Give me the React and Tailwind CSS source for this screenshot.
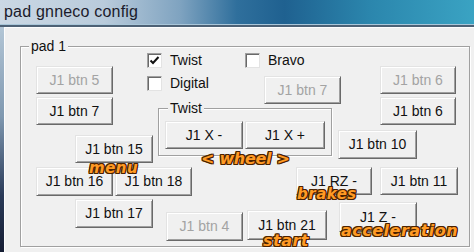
import React from 'react';

const font = { fontFamily: '"Liberation Sans", Arial, sans-serif' };

function Btn({ w = 'w-[77px]', h = 'h-[28px]', disabled, className = '', children }) {
  return (
    <div
      className={`${w} ${h} shrink-0 flex items-center justify-center bg-[#f0f0f0] border border-t-[#e3e3e3] border-l-[#e3e3e3] border-b-[#696969] border-r-[#696969] shadow-[inset_1px_1px_0_#ffffff,inset_-1px_-1px_0_#a0a0a0] text-[14px] ${disabled ? 'text-[#a3a3a3]' : 'text-[#111]'} ${className}`}
    >
      {children}
    </div>
  );
}

function Check({ checked, label }) {
  return (
    <div className="flex items-center gap-[8px] h-[15px] text-[14px] text-[#111]">
      <div className="w-[15px] h-[15px] bg-white border border-t-[#a0a0a0] border-l-[#a0a0a0] border-b-[#e3e3e3] border-r-[#e3e3e3] shadow-[inset_1px_1px_0_#696969] flex items-center justify-center">
        {checked && (
          <svg width="11" height="11" viewBox="0 0 11 11">
            <path d="M1.5 5.5 L4 8 L9.5 2" fill="none" stroke="#111" strokeWidth="2" />
          </svg>
        )}
      </div>
      <span>{label}</span>
    </div>
  );
}

// orange hand-written notes pasted over the dialog
function Note({ className, children }) {
  return (
    <div
      className={`absolute italic font-bold text-[#ff9a24] whitespace-nowrap leading-none ${className}`}
      style={{
        fontFamily: '"DejaVu Sans", sans-serif',
        textShadow:
          '1px 0 0 #4a2200, -1px 0 0 #4a2200, 0 1px 0 #4a2200, 0 -1px 0 #4a2200, 1px 1px 0 #4a2200, -1px -1px 0 #4a2200, 1px -1px 0 #4a2200, -1px 1px 0 #4a2200',
      }}
    >
      {children}
    </div>
  );
}

export default function App() {
  return (
    <div className="w-[474px] h-[252px] flex flex-col overflow-hidden bg-[#f0f0f0]" style={font}>
      {/* title bar */}
      <div className="h-[24px] flex items-center pl-[4px] bg-[linear-gradient(90deg,#cbd8e4_0%,#b9cbdb_22%,#7fa3c0_38%,#2f6f9c_50%,#1f6190_60%,#2b86ad_78%,#3aa3c3_100%)]">
        <span className="text-[16px] text-[#1b1b2b] tracking-[0.2px]">pad gnneco config</span>
      </div>
      <div className="h-px bg-[#a9c6d9]" />
      <div className="h-[2px] bg-[#4d6175]" />

      <div className="flex flex-1">
        <div className="w-[4px] bg-[linear-gradient(180deg,#b3c6d6_0%,#7f98b0_40%,#2a3a58_75%,#151d33_100%)]" />
        <div className="flex-1 border-t border-l border-[#fdfdfd] bg-[#f0f0f0] pl-[15px] pt-[18px]">
          {/* group box pad 1 */}
          <div className="relative w-[450px] h-[201px] border border-[#a0a0a0] shadow-[1px_1px_0_#ffffff,inset_1px_1px_0_#ffffff] pl-[15px] pt-[6px]">
            <span className="absolute left-[8px] top-[-9px] px-[2px] bg-[#f0f0f0] text-[14px] leading-[16px] text-[#111]">pad 1</span>

            {/* upper part */}
            <div className="flex items-start">
              <div className="flex flex-col shrink-0 w-[117px] mt-[13px]">
                <Btn disabled>J1 btn 5</Btn>
                <Btn className="mt-[3px]">J1 btn 7</Btn>
                <Btn w="w-[78px]" className="mt-[10px] ml-[39px]">J1 btn 15</Btn>
              </div>

              <div className="flex flex-col shrink-0 w-[174px] ml-[5px]">
                <div className="flex -ml-[11px]">
                  <div className="flex flex-col shrink-0 gap-[8px] w-[98px]">
                    <Check checked label="Twist" />
                    <Check label="Digital" />
                  </div>
                  <div className="flex flex-col shrink-0">
                    <Check label="Bravo" />
                    <Btn disabled className="mt-[8px] ml-[19px]">J1 btn 7</Btn>
                  </div>
                </div>

                {/* Twist group */}
                <div className="relative mt-[4px] h-[48px] border border-[#a0a0a0] shadow-[1px_1px_0_#ffffff,inset_1px_1px_0_#ffffff] flex gap-[2px] pl-[6px] pt-[12px]">
                  <span className="absolute left-[9px] top-[-9px] px-[2px] bg-[#f0f0f0] text-[14px] leading-[16px] text-[#111]">Twist</span>
                  <Btn w="w-[78px]">J1 X -</Btn>
                  <Btn w="w-[80px]">J1 X +</Btn>
                </div>
              </div>

              <div className="flex flex-col shrink-0 ml-[6px] mt-[13px]">
                <Btn w="w-[76px]" className="ml-[42px]" disabled>J1 btn 6</Btn>
                <Btn w="w-[76px]" className="ml-[42px] mt-[3px]">J1 btn 6</Btn>
                <Btn w="w-[79px]" h="h-[29px]" className="mt-[5px]">J1 btn 10</Btn>
              </div>
            </div>

            {/* middle row */}
            <div className="flex mt-[4px]">
              <Btn h="h-[29px]">J1 btn 16</Btn>
              <Btn h="h-[29px]" className="ml-[2px]">J1 btn 18</Btn>
              <Btn w="w-[76px]" className="ml-[104px]">J1 RZ -</Btn>
              <Btn w="w-[78px]" className="ml-[8px]">J1 btn 11</Btn>
            </div>

            {/* bottom row */}
            <div className="flex items-start mt-[3px] ml-[39px]">
              <Btn w="w-[78px]" h="h-[29px]">J1 btn 17</Btn>
              <Btn h="h-[29px]" className="mt-[13px] ml-[13px]" disabled>J1 btn 4</Btn>
              <Btn w="w-[80px]" h="h-[30px]" className="mt-[11px] ml-[4px]">J1 btn 21</Btn>
              <Btn w="w-[78px]" h="h-[30px]" className="mt-[3px] ml-[12px]">J1 Z -</Btn>
            </div>

            <Note className="left-[180px] top-[104px] text-[16px] tracking-[-0.3px]">&lt; wheel &gt;</Note>
            <Note className="left-[68px] top-[114px] text-[15px] tracking-[0.5px]">menu</Note>
            <Note className="left-[276px] top-[140px] text-[15px] tracking-[0.5px]">brakes</Note>
            <Note className="left-[242px] top-[186px] text-[16px] tracking-[0.5px]">start</Note>
            <Note className="left-[320px] top-[176px] text-[16px] tracking-[0.5px]">acceleration</Note>
          </div>
        </div>
      </div>
    </div>
  );
}
